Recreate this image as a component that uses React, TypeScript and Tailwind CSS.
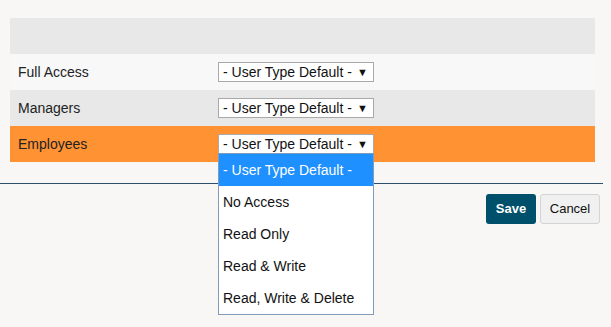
import React from 'react';

const OPTIONS = ['- User Type Default -', 'No Access', 'Read Only', 'Read & Write', 'Read, Write & Delete'];

const rows = [
  { label: 'Full Access', bg: 'bg-[#f8f8f8]' },
  { label: 'Managers', bg: 'bg-[#e8e8e8]' },
  { label: 'Employees', bg: 'bg-[#ff9233]', open: true },
];

const FakeSelect: React.FC<{ open?: boolean }> = ({ open }) => (
  <div className="relative">
    <div className="w-[156px] h-[20px] bg-white border border-[#a9a9a9] flex items-center justify-between pl-[4px] pr-[5px] text-[14px] text-[#111]">
      <span>- User Type Default -</span>
      <span className="text-[11px] leading-none">▼</span>
    </div>
    {open && (
      <div className="absolute left-0 top-[19px] w-[156px] bg-white border border-[#7f9db9] z-10">
        {OPTIONS.map((o, i) => (
          <div
            key={o}
            className={`h-[32px] flex items-center pl-[4px] text-[14px] ${i === 0 ? 'bg-[#1e90ff] text-white' : 'text-[#111]'}`}
          >
            {o}
          </div>
        ))}
      </div>
    )}
  </div>
);

export default function App() {
  return (
    <div className="w-[611px] h-[327px] bg-[#f8f7f6] pt-[18px] font-['Liberation_Sans',Arial,sans-serif] overflow-hidden">
      <div className="mx-[10px] w-[585px]">
        <div className="h-[36px] bg-[#e8e8e8]" />
        {rows.map((r) => (
          <div key={r.label} className={`h-[36px] flex items-center ${r.bg}`}>
            <div className="w-[208px] pl-[8px] text-[14px] text-[#222]">{r.label}</div>
            <FakeSelect open={r.open} />
          </div>
        ))}
      </div>
      <div className="mt-[21px] w-[603px] h-px bg-[#2c4f6e]" />
      <div className="w-[600px] flex justify-end gap-[4px] mt-[10px]">
        <button className="h-[30px] w-[50px] rounded-[3px] bg-[#00506b] text-white font-bold text-[13px]">Save</button>
        <button className="h-[30px] w-[60px] rounded-[3px] bg-[#f0f0f0] border border-[#d4d4d4] text-[#111] text-[13px]">Cancel</button>
      </div>
    </div>
  );
}
